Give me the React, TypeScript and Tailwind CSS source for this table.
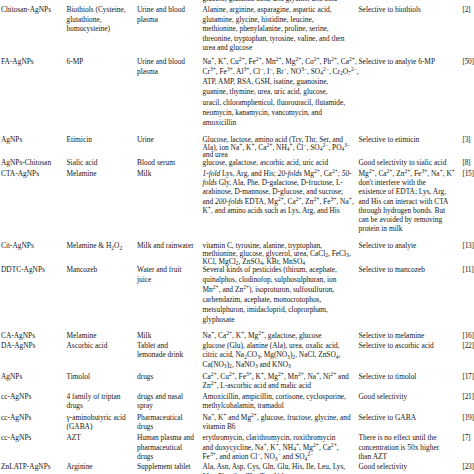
import React from "react";

type Row = { mt: string; lh: string; cells: string[][] };

// ^{..} superscript, _{..} subscript, *..* italic
function fmt(s: string) {
  const parts = s.split(/(\^\{[^}]*\}|_\{[^}]*\}|\*[^*]+\*)/g);
  return parts.map((p, i) => {
    if (p.startsWith("^{")) return <sup key={i}>{p.slice(2, -1)}</sup>;
    if (p.startsWith("_{")) return <sub key={i}>{p.slice(2, -1)}</sub>;
    if (p.startsWith("*") && p.length > 1) return <i key={i}>{p.slice(1, -1)}</i>;
    return <React.Fragment key={i}>{p}</React.Fragment>;
  });
}

const rows: Row[] = [
  {
    mt: "mt-[-6px]",
    lh: "leading-[10px]",
    cells: [[], [], [], ["glucose, glutamic acid, uric glycine, uric acid"], [], []],
  },
  {
    mt: "mt-[1.3px]",
    lh: "leading-[9.4px]",
    cells: [
      ["Chitosan-AgNPs"],
      ["Biothiols (Cysteine,", "glutathione,", "homocysteine)"],
      ["Urine and blood", "plasma"],
      [
        "Alanine, arginine, asparagine, aspartic acid,",
        "glutamine, glycine, histidine, leucine,",
        "methionine, phenylalanine, proline, serine,",
        "threonine, tryptophan, tyrosine, valine, and then",
        "urea and glucose",
      ],
      ["Selective to biothiols"],
      ["[2]"],
    ],
  },
  {
    mt: "mt-[4.5px]",
    lh: "leading-[10.2px]",
    cells: [
      ["FA-AgNPs"],
      ["6-MP"],
      ["Urine and blood", "plasma"],
      [
        "Na^{+}, K^{+}, Cu^{2+}, Fe^{2+}, Mn^{2+}, Mg^{2+}, Co^{2+}, Pb^{2+}, Ca^{2+},",
        "Cr^{3+}, Fe^{3+}, Al^{3+}, Cl^{−}, I^{−}, Br^{−}, NO^{3−}, SO_{4}^{2−}, Cr_{2}O_{7}^{2−},",
        "ATP, AMP, BSA, GSH, isatine, guanosine,",
        "guanine, thymine, urea, uric acid, glucose,",
        "uracil, chloramphenicol, fluorouracil, flutamide,",
        "neomycin, kanamycin, vancomycin, and",
        "amoxicillin",
      ],
      ["Selective to analyte 6-MP"],
      ["[50]"],
    ],
  },
  {
    mt: "mt-[8px]",
    lh: "leading-[7.4px]",
    cells: [
      ["AgNPs"],
      ["Etimicin"],
      ["Urine"],
      [
        "Glucose, lactose, amino acid (Try, Thr, Ser, and",
        "Ala), ion Na^{+}, K^{+}, Ca^{2+}, NH_{4}^{+}, Cl^{−}, SO_{4}^{2−}, PO_{4}^{3−}",
        "and urea",
      ],
      ["Selective to etimicin"],
      ["[3]"],
    ],
  },
  {
    mt: "mt-[0.6px]",
    lh: "leading-[8.4px]",
    cells: [
      ["AgNPs-Chitosan"],
      ["Sialic acid"],
      ["Blood serum"],
      ["glucose, galactose, ascorbic acid, uric acid"],
      ["Good selectivity to sialic acid"],
      ["[8]"],
    ],
  },
  {
    mt: "mt-[1.2px]",
    lh: "leading-[9.3px]",
    cells: [
      ["CTA-AgNPs"],
      ["Melamine"],
      ["Milk"],
      [
        "*1-fold* Lys, Arg, and His; *20-folds* Mg^{2+}, Ca^{2+}; *50-*",
        "*folds* Gly, Ala, Phe, D-galactose, D-fructose, L-",
        "arabinose, D-mannose, D-glucose, and sucrose;",
        "and *200-folds* EDTA, Mg^{2+}, Ca^{2+}, Zn^{2+}, Fe^{3+}, Na^{+},",
        "K^{+}, and amino acids such as Lys, Arg, and His",
      ],
      [
        "Mg^{2+}, Ca^{2+}, Zn^{2+}, Fe^{3+}, Na^{+}, K^{+}",
        "don't interfere with the",
        "existence of EDTA; Lys, Arg,",
        "and His can interact with CTA",
        "through hydrogen bonds. But",
        "can be avoided by removing",
        "protein in milk",
      ],
      ["[15]"],
    ],
  },
  {
    mt: "mt-[8.6px]",
    lh: "leading-[7.6px]",
    cells: [
      ["Cit-AgNPs"],
      ["Melamine & H_{2}O_{2}"],
      ["Milk and rainwater"],
      [
        "vitamin C, tyrosine, alanine, tryptophan,",
        "methionine, glucose, glycerol, urea, CaCl_{2}, FeCl_{3},",
        "KCl, MgCl_{2}, ZnSO_{4}, KBr, MnSO_{4}",
      ],
      ["Selective to analyte"],
      ["[13]"],
    ],
  },
  {
    mt: "mt-[0px]",
    lh: "leading-[10px]",
    cells: [
      ["DDTC-AgNPs"],
      ["Mancozeb"],
      ["Water and fruit", "juice"],
      [
        "Several kinds of pesticides (thirum, acephate,",
        "quinalphos, clodinofop, sulphosulphuran, ion",
        "Mn^{2+}, and Zn^{2+}), isoproturon, sulfosulfuron,",
        "carbendazim, acephate, monocrotophos,",
        "metsulphuron, imidacloprid, cloprorpham,",
        "glyphosate",
      ],
      ["Selective to mancozeb"],
      ["[11]"],
    ],
  },
  {
    mt: "mt-[6px]",
    lh: "leading-[9.4px]",
    cells: [
      ["CA-AgNPs"],
      ["Melamine"],
      ["Milk"],
      ["Na^{+}, Ca^{2+}, K^{+}, Mg^{2+}, galactose, glucose"],
      ["Selective to melamine"],
      ["[16]"],
    ],
  },
  {
    mt: "mt-[0.7px]",
    lh: "leading-[9.2px]",
    cells: [
      ["DA-AgNPs"],
      ["Ascorbic acid"],
      ["Tablet and", "lemonade drink"],
      [
        "glucose (Glu), alanine (Ala), urea, oxalic acid,",
        "citric acid, Na_{2}CO_{3}, Mg(NO_{3})_{2}, NaCl, ZnSO_{4},",
        "Ca(NO_{3})_{2}, NaNO_{3} and KNO_{3}",
      ],
      ["Selective to ascorbic acid"],
      ["[22]"],
    ],
  },
  {
    mt: "mt-[3px]",
    lh: "leading-[9.2px]",
    cells: [
      ["AgNPs"],
      ["Timolol"],
      ["drugs"],
      [
        "Ca^{2+}, Cu^{2+}, Fe^{3+}, K^{+}, Mg^{2+}, Mn^{2+}, Na^{+}, Ni^{2+} and",
        "Zn^{2+}, L-ascorbic acid and malic acid",
      ],
      ["Selective to timolol"],
      ["[17]"],
    ],
  },
  {
    mt: "mt-[1.6px]",
    lh: "leading-[9.6px]",
    cells: [
      ["cc-AgNPs"],
      ["4 family of triptan", "drugs"],
      ["drugs and nasal", "spray"],
      ["Amoxicillin, ampicillin, cortisone, cyclosporine,", "methylcobalamin, tramadol"],
      ["Good selectivity"],
      ["[21]"],
    ],
  },
  {
    mt: "mt-[1.6px]",
    lh: "leading-[9.6px]",
    cells: [
      ["cc-AgNPs"],
      ["γ-aminobutyric acid", "(GABA)"],
      ["Pharmaceutical", "drugs"],
      ["Na^{+}, K^{+} and Mg^{2+}, glucose, fructose, glycine, and", "vitamin B6"],
      ["Selective to GABA"],
      ["[19]"],
    ],
  },
  {
    mt: "mt-[1.6px]",
    lh: "leading-[9.4px]",
    cells: [
      ["cc-AgNPs"],
      ["AZT"],
      ["Human plasma and", "pharmaceutical", "drugs"],
      [
        "erythromycin, clarithromycin, roxithromycin",
        "and doxycycline, Na^{+}, K^{+}, NH_{4}^{+}, Mg^{2+}, Ca^{2+},",
        "Fe^{3+}, and anion Cl^{−}, NO_{3}^{−} and SO_{4}^{2−}",
      ],
      ["There is no effect until the", "concentration is 50x higher", "than AZT"],
      ["[7]"],
    ],
  },
  {
    mt: "mt-[0.4px]",
    lh: "leading-[9.6px]",
    cells: [
      ["ZnLATP-AgNPs"],
      ["Arginine"],
      ["Supplement tablet"],
      ["Ala, Asn, Asp, Cys, Gln, Glu, His, Ile, Leu, Lys,", "Met, Phe, Ser, Thr, Trp, Val"],
      ["Good selectivity"],
      ["[23]"],
    ],
  },
];

export default function App() {
  return (
    <div className="w-[474px] h-[474px] overflow-hidden bg-white text-[#161616] text-[7.4px] font-['Liberation_Serif',serif]">
      {rows.map((row, r) => (
        <div
          key={r}
          className={`grid grid-cols-[66.5px_70.5px_65.5px_156px_104px_1fr] ${row.mt} ${row.lh}`}
        >
          {row.cells.map((lines, c) => (
            <div key={c} className={c === 0 ? "pl-px" : c === 5 ? "tracking-[-0.3px]" : ""}>
              {lines.map((l, k) => (
                <div key={k} className="whitespace-nowrap">
                  {fmt(l)}
                </div>
              ))}
            </div>
          ))}
        </div>
      ))}
    </div>
  );
}
